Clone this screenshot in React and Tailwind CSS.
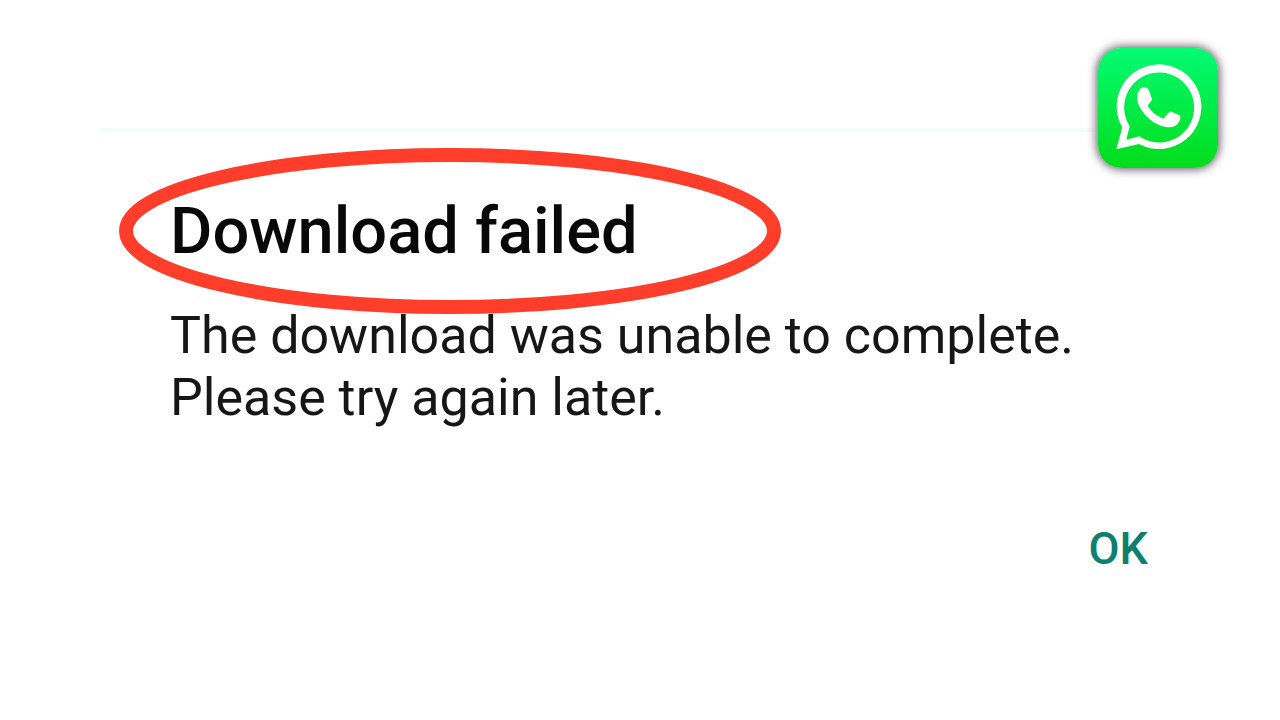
function WhatsAppIcon() {
  return (
    <svg viewBox="0 0 360 360" className="h-[120px] w-[120px]" role="img" aria-label="WhatsApp">
      <defs>
        <linearGradient id="wa-green" x1="0" y1="0" x2="0" y2="1">
          <stop offset="0" stopColor="#02fb72" />
          <stop offset="1" stopColor="#02dc1a" />
        </linearGradient>
      </defs>
      <rect width="360" height="360" rx="70" fill="url(#wa-green)" />
      <g transform="translate(-55 -53)" fill="#fff">
        {/* speech bubble: outer edge with tail, inner edge cut out */}
        <path
          fillRule="evenodd"
          d="M110 357 L128 291 C116 271 111 250 111 229 A127 127 0 1 1 178 341 Z M140 328 L179 318 A105 105 0 1 0 150 288 Z"
        />
        {/* handset */}
        <path d="M190 171 C199 169 204 172 207 179 L216 203 C218 209 215 213 204 225 C214 245 230 257 252 265 L265 249 C269 244 272 243 277 245 L298 254 C303 257 303 261 301 269 C295 286 280 292 262 291 C223 284 196 259 180 230 C171 212 170 193 179 180 C183 174 186 172 190 171 Z" />
      </g>
    </svg>
  );
}

function Highlight() {
  return (
    <svg
      viewBox="0 0 662 168"
      className="pointer-events-none absolute -top-11 -left-[51px] h-[168px] w-[662px]"
      aria-hidden="true"
    >
      <ellipse cx="331" cy="84" rx="324" ry="76" fill="none" stroke="#ff3d2b" strokeWidth="14" />
    </svg>
  );
}

function App() {
  return (
    <main className="relative min-h-screen bg-white pt-32 pl-[100px] font-['Roboto',sans-serif]">
      <div className="absolute top-12 right-[62px] rounded-3xl shadow-[0_0_8px_2px_rgba(60,40,60,0.7)]">
        <WhatsAppIcon />
      </div>

      <hr className="mr-[184px] border-t-4 border-[#f4fbfd]" />

      <section
        role="alertdialog"
        aria-labelledby="title"
        aria-describedby="message"
        className="pt-[59px] pr-[132px] pl-[70px]"
      >
        <div className="relative w-fit">
          <h1 id="title" className="text-[65px] leading-[80px] font-medium text-[#080808]">
            Download failed
          </h1>
          <Highlight />
        </div>
        <p id="message" className="mt-[34px] text-[52px] leading-[62px] text-[#161616]">
          The download was unable to complete.
          <br />
          Please try again later.
        </p>
        <div className="mt-20 flex justify-end">
          <button type="button" className="text-[45px] leading-[80px] font-medium text-[#0d8070]">
            OK
          </button>
        </div>
      </section>
    </main>
  );
}

export default App;
